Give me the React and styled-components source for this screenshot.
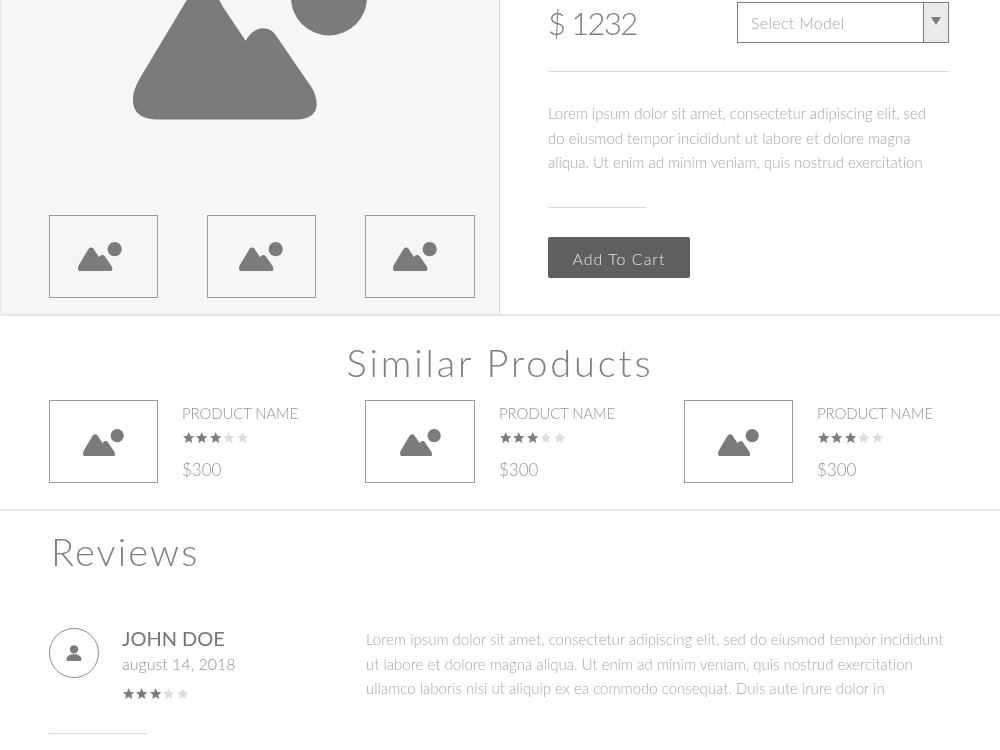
import React from "react";
import styled, { createGlobalStyle } from "styled-components";

const Global = createGlobalStyle`
  html, body { margin: 0; padding: 0; background: #fff; height: 750px; overflow: hidden; }
  * { box-sizing: border-box; }
  body { font-family: Lato, "Liberation Sans", sans-serif; font-weight: 300; color: #777; }
`;
const Page = styled.div`width: 1000px; height: 750px; overflow: hidden; will-change: transform;`;
const Hero = styled.section`display: flex; height: 316px; border-bottom: 2px solid #e6e6e6;`;
const Gallery = styled.div`
  width: 500px; background: #f6f6f6; border-left: 1px solid #e6e6e6; border-right: 1px solid #dcdcdc;
  display: flex; flex-direction: column;
`;
const HeroPicture = styled.svg`display: block; width: 235px; height: 120px; margin: 0 0 95px 132px; fill: #7b7b7b;`;
const ThumbRow = styled.div`display: flex; gap: 49px; padding-left: 48px;`;
const Frame = styled.div`
  width: ${p => p.$w || 109}px; height: 83px; border: 1px solid #9a9a9a; flex: none;
  display: flex; align-items: center; padding-left: ${p => p.$inset}px; padding-top: ${p => p.$drop || 0}px;
`;
const Glyph = styled.svg`display: block; width: ${p => p.$size}px; height: ${p => p.$size * 160 / 235}px; fill: #7b7b7b;`;
const Buy = styled.div`flex: 1; padding: 2px 51px 0 48px; display: flex; flex-direction: column;`;
const PriceRow = styled.div`display: flex; justify-content: space-between; align-items: center; height: 41px; margin-bottom: 28px;`;
const Price = styled.div`font-size: 31px; padding-top: 2px; letter-spacing: -1.600px; color: #7d7d7d; font-weight: 300; line-height: 41px;`;
const Select = styled.div`width: 212px; height: 41px; border: 1px solid #7d7d7d; display: flex; align-items: stretch;`;
const SelectLabel = styled.div`flex: 1; padding-left: 13px; line-height: 39px; font-size: 16px; color: #a3a3a3; letter-spacing: .3px;`;
const SelectArrow = styled.div`width: 25px; background: #ebebeb; border-left: 1px solid #7d7d7d; display: flex; justify-content: center; padding-top: 14px;
  &::after { content: ""; width: 0; height: 0; border-left: 5px solid transparent; border-right: 5px solid transparent; border-top: 8px solid #7b7b7b; }`;
const Rule = styled.div`height: 1px; background: #d9d9d9; width: ${p => p.$w || "100%"}; flex: none;`;
const Text = styled.p`margin: 0; font-size: 15px; line-height: 24.5px; letter-spacing: -.02px; color: #a8a8a8; font-weight: 300; white-space: nowrap;`;
const BuyText = styled(Text)`margin: 29px 0 32px;`;
const ReviewText = styled(Text)`padding-top: 1px; letter-spacing: .01px;`;
const CartButton = styled.button`
  margin-top: 29px; width: 142px; height: 41px; background: #5f5f5f; color: #e6e6e6; border: 0; border-radius: 2px;
  font: 300 16px Lato, sans-serif; letter-spacing: 1px; padding: 2px 0 0;
`;
const Similar = styled.section`height: 195px; border-bottom: 2px solid #e6e6e6;`;
const SectionTitle = styled.h2`margin: 0; padding-top: 9px; font-weight: 300; font-size: 38px; line-height: 75px; letter-spacing: 2.850px; color: #808080; text-align: center;`;
const ProductGrid = styled.div`display: flex; padding-left: 49px;`;
const Product = styled.div`display: flex; gap: 24px; width: ${p => p.$w}px; flex: none;`;
const ProductInfo = styled.div`display: flex; flex-direction: column; padding-top: 3px;`;
const ProductName = styled.div`font-size: 15px; letter-spacing: -.15px; line-height: 20px; color: #949494;`;
const Stars = styled.div`display: flex; margin-top: ${p => p.$top}px;`;
const StarIcon = styled.svg`display: block; width: 13.400px; height: 13px; fill: ${p => p.$on ? "#7b7b7b" : "#dddddd"};`;
const ProductPrice = styled.div`font-size: 17px; line-height: 24px; margin-top: 14px; color: #949494;`;
const Reviews = styled.section`padding: 0 50px 0 49px;`;
const ReviewsTitle = styled.h2`margin: 0 0 0 2px; font-weight: 300; font-size: 38px; line-height: 80px; letter-spacing: 2.100px; color: #808080;`;
const ReviewRow = styled.div`display: flex; margin-top: 35px;`;
const Avatar = styled.div`width: 50px; height: 50px; margin-top: 2px; border-radius: 50%; border: 1px solid #8a8a8a; display: flex; align-items: center; justify-content: center; flex: none;`;
const AvatarIcon = styled.svg`width: 18px; height: 18px; fill: #7b7b7b; display: block;`;
const Author = styled.div`width: 267px; padding-left: 23px; flex: none;`;
const AuthorName = styled.div`font-size: 20px; font-weight: 400; line-height: 24px; color: #757575;`;
const AuthorDate = styled.div`font-size: 16px; line-height: 24px; margin-top: 2px; color: #909090;`;
const ReviewRule = styled(Rule)`margin-top: 32px;`;

const Art = () => (<>
  <circle cx="329" cy="-2.5" r="38" />
  <path d="M160 119.5C140 119.5 133 112 133 100C133 92 136 85 140 78L185 3C192 -9 198 -11 205 -11C212 -11 218 -3 223 7L245.7 40.7C250 33 256 28.3 263 28.3C269 28.3 273 31 277 37L312 88C315 93 316.7 99 316.7 105C316.7 114 308 119.5 297 119.5Z" />
</>);
const Pic = ({ size }) => <Glyph $size={size} viewBox="133 -40.5 235 160"><Art /></Glyph>;
const Rating = ({ top }) => (
  <Stars $top={top}>
    {[0, 1, 2, 3, 4].map(i => (
      <StarIcon key={i} $on={i < 3} viewBox="0 0 24 24"><path d="M12 2l3 7 7.500 .7-5.700 5 1.700 7.300L12 18.200 5.500 22l1.700-7.300-5.700-5L9 9z" /></StarIcon>
    ))}
  </Stars>
);
const items = [{ w: 316, inset: 33, fw: 109 }, { w: 319, inset: 34, fw: 110 }, { w: 300, inset: 33, fw: 109 }];

export default function App() {
  return (
    <Page>
      <Global />
      <Hero>
        <Gallery>
          <HeroPicture viewBox="133 0 235 120"><Art /></HeroPicture>
          <ThumbRow>
            <Frame $inset={28}><Pic size={44} /></Frame>
            <Frame $inset={31}><Pic size={44} /></Frame>
            <Frame $w={110} $inset={27}><Pic size={44} /></Frame>
          </ThumbRow>
        </Gallery>
        <Buy>
          <PriceRow>
            <Price>$ 1232</Price>
            <Select><SelectLabel>Select Model</SelectLabel><SelectArrow /></Select>
          </PriceRow>
          <Rule />
          <BuyText>Lorem ipsum dolor sit amet, consectetur adipiscing elit, sed<br />do eiusmod tempor incididunt ut labore et dolore magna<br />aliqua. Ut enim ad minim veniam, quis nostrud exercitation</BuyText>
          <Rule $w="98px" />
          <CartButton>Add To Cart</CartButton>
        </Buy>
      </Hero>
      <Similar>
        <SectionTitle>Similar Products</SectionTitle>
        <ProductGrid>
          {items.map((it, i) => (
            <Product key={i} $w={it.w}>
              <Frame $w={it.fw} $inset={it.inset} $drop={2}><Pic size={41} /></Frame>
              <ProductInfo>
                <ProductName>PRODUCT NAME</ProductName>
                <Rating top={8} />
                <ProductPrice>$300</ProductPrice>
              </ProductInfo>
            </Product>
          ))}
        </ProductGrid>
      </Similar>
      <Reviews>
        <ReviewsTitle>Reviews</ReviewsTitle>
        <ReviewRow>
          <Avatar><AvatarIcon viewBox="0 0 24 24"><circle cx="12" cy="7" r="5.500" /><path d="M2 21c0-5 4-7.500 10-7.500s10 2.500 10 7.500c0 1-.5 1.500-1.500 1.500h-17c-1 0-1.500-.5-1.500-1.500z" /></AvatarIcon></Avatar>
          <Author>
            <AuthorName>JOHN DOE</AuthorName>
            <AuthorDate>august 14, 2018</AuthorDate>
            <Rating top={11} />
          </Author>
          <ReviewText>Lorem ipsum dolor sit amet, consectetur adipiscing elit, sed do eiusmod tempor incididunt<br />ut labore et dolore magna aliqua. Ut enim ad minim veniam, quis nostrud exercitation<br />ullamco laboris nisi ut aliquip ex ea commodo consequat. Duis aute irure dolor in</ReviewText>
        </ReviewRow>
        <ReviewRule $w="98px" />
      </Reviews>
    </Page>
  );
}
